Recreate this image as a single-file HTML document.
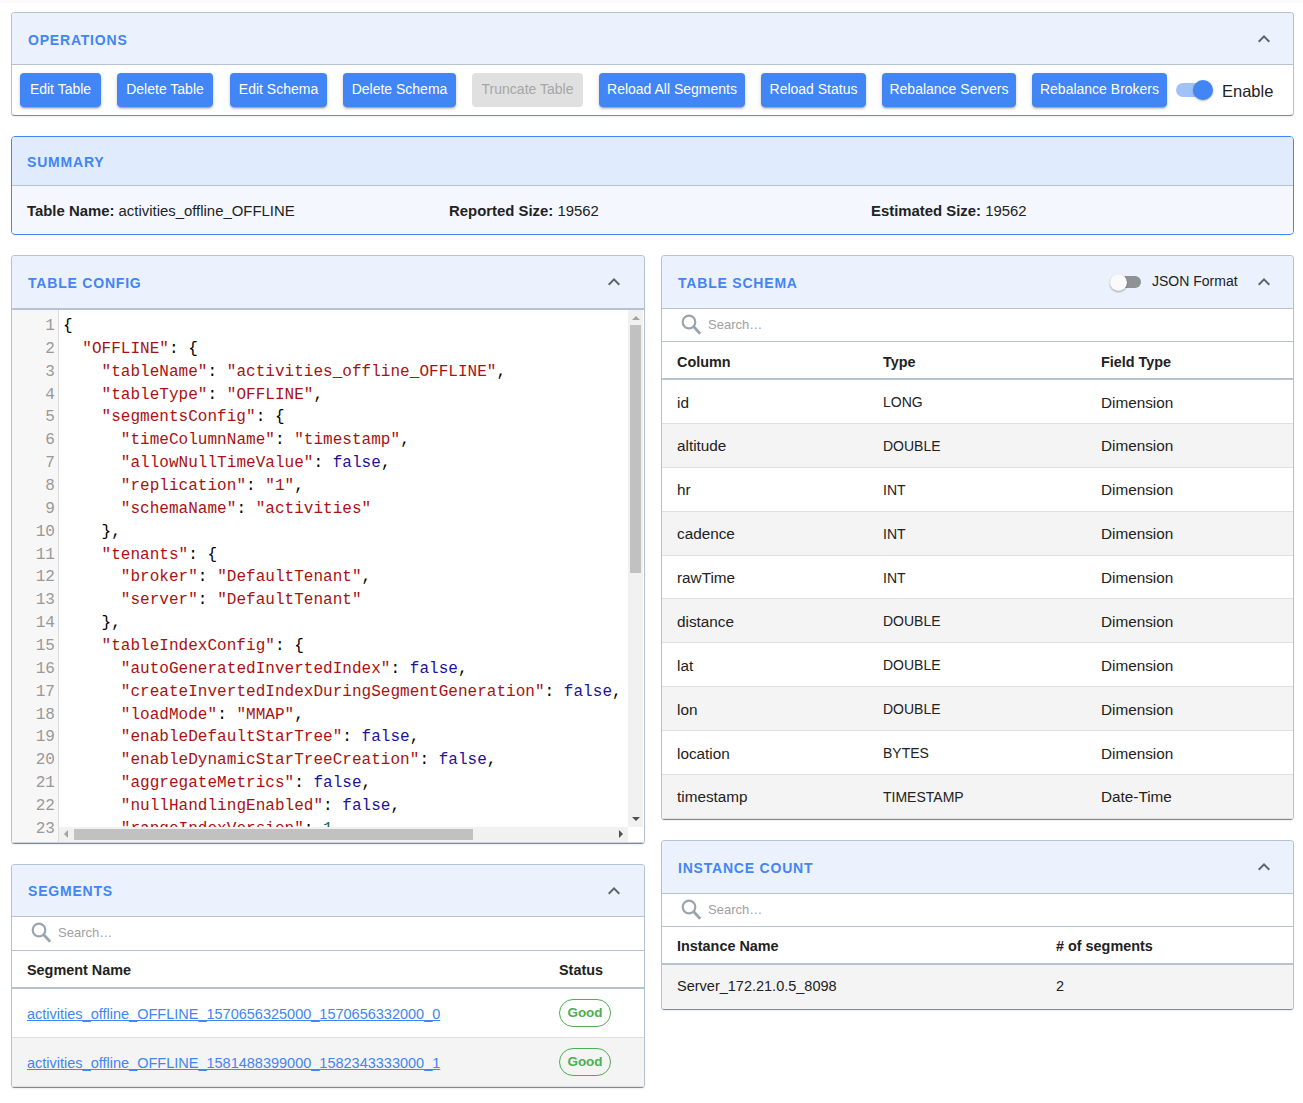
<!DOCTYPE html>
<html><head><meta charset="utf-8">
<style>
*{box-sizing:border-box;margin:0;padding:0}
html,body{width:1303px;height:1103px;overflow:hidden;background:#fff;font-family:"Liberation Sans",sans-serif;color:#222}
.topstrip{position:absolute;left:0;top:0;width:1303px;height:3px;background:#fafafa}
.panel{position:absolute;border:1px solid #b5c3d0;border-bottom-color:#7f8a94;border-radius:4px;background:#fff;overflow:hidden;box-shadow:0 1px 2px rgba(0,0,0,.07)}
.hdr{position:relative;height:52px;background:#ebf2fd;border-bottom:1px solid #b5c3d0}
.ttl{position:absolute;left:16px;top:19px;font-size:14px;font-weight:bold;letter-spacing:0.8px;color:#4285f4;line-height:15px}
.chev{position:absolute}
.btnrow{position:relative;height:50px}
.btn{position:absolute;top:8px;height:34px;border-radius:4px;background:#4285f4;color:#fff;font-size:14px;line-height:33px;text-align:center;box-shadow:0 3px 1px -2px rgba(0,0,0,.2),0 2px 2px 0 rgba(0,0,0,.14),0 1px 5px 0 rgba(0,0,0,.12)}
.btn.dis{background:#e0e0e0;color:#a6a6a6;box-shadow:none}
.search{position:relative;height:33px;border-bottom:1px solid #b5c3d0}
.search svg{position:absolute;left:18px;top:4px}
.search span{position:absolute;left:46px;top:9px;font-size:13px;color:#a0a0a0;line-height:14px}
.th{position:relative;border-bottom:2px solid #b5c3d0;font-weight:bold;font-size:14.4px;color:#222}
.th div,.tr div{position:absolute;white-space:nowrap}
.tr{position:relative;border-bottom:1px solid #e0e0e0;font-size:14.5px;color:#222}
.tr.alt{background:#f4f4f4}
.cm{position:absolute;left:0;top:54px;width:632px;height:533px;background:#fff;overflow:hidden;border-bottom:1px solid #c8d4de}
.cm .gut{position:absolute;left:0;top:0;width:47px;height:533px;background:#f7f7f7;border-right:1px solid #ddd}
.cm .lines{position:absolute;left:0;top:5px;width:616px;font-family:"Liberation Mono",monospace;font-size:16px;letter-spacing:0.03px}
.ln{position:relative;height:22.86px;line-height:22.86px;white-space:pre}
.ln .g{position:absolute;left:0;width:43px;text-align:right;color:#999}
.ln pre{position:absolute;left:51px;font:inherit;color:#000}
.s{color:#a11}.a{color:#219}.n{color:#164}
.cm .vsb{position:absolute;left:616px;top:0;width:15px;height:517px;background:#f1f1f1}
.cm .vsb .thumb{position:absolute;left:2px;top:15px;width:11px;height:248px;background:#c1c1c1}
.cm .vsb .up{position:absolute;left:3.5px;top:6px;width:0;height:0;border-left:4px solid transparent;border-right:4px solid transparent;border-bottom:4px solid #a3a3a3}
.cm .vsb .dn{position:absolute;left:3.5px;top:507px;width:0;height:0;border-left:4px solid transparent;border-right:4px solid transparent;border-top:4px solid #505050}
.cm .hsb{position:absolute;left:47px;top:517px;width:569px;height:15px;background:#f1f1f1}
.cm .hsb .thumb{position:absolute;left:15px;top:2px;width:399px;height:11px;background:#c1c1c1}
.cm .hsb .lt{position:absolute;left:5px;top:3px;width:0;height:0;border-top:4px solid transparent;border-bottom:4px solid transparent;border-right:4px solid #a3a3a3}
.cm .hsb .rt{position:absolute;left:560px;top:3px;width:0;height:0;border-top:4px solid transparent;border-bottom:4px solid transparent;border-left:4px solid #505050}
.cm .corner{position:absolute;left:616px;top:517px;width:15px;height:15px;background:#fff}
.lnk{color:#4285f4;text-decoration:underline;font-size:14.5px}
.chip{height:28px;width:52px;border:1px solid #4caf50;border-radius:14px;color:#4caf50;font-weight:bold;font-size:13.5px;line-height:26px;text-align:center}
</style></head><body>
<div class="topstrip"></div>

<!-- OPERATIONS -->
<div class="panel" style="left:11px;top:12px;width:1283px;height:104px">
  <div class="hdr" style="height:52px"><div class="ttl" style="top:20px">OPERATIONS</div>
    <svg class="chev" style="left:1240px;top:14px" width="24" height="24" viewBox="0 0 24 24"><path d="M12 8l-6 6 1.41 1.41L12 10.83l4.59 4.58L18 14z" fill="#5f6368"/></svg>
  </div>
  <div class="btnrow">
    <div class="btn" style="left:8px;width:81px">Edit Table</div>
    <div class="btn" style="left:105px;width:96px">Delete Table</div>
    <div class="btn" style="left:218px;width:97px">Edit Schema</div>
    <div class="btn" style="left:331px;width:113px">Delete Schema</div>
    <div class="btn dis" style="left:460px;width:111px">Truncate Table</div>
    <div class="btn" style="left:587px;width:146px">Reload All Segments</div>
    <div class="btn" style="left:749px;width:105px">Reload Status</div>
    <div class="btn" style="left:870px;width:134px">Rebalance Servers</div>
    <div class="btn" style="left:1020px;width:135px">Rebalance Brokers</div>
    <div style="position:absolute;left:1164px;top:18px;width:34px;height:14px;border-radius:7px;background:#a0c2f9"></div>
    <div style="position:absolute;left:1181px;top:15px;width:20px;height:20px;border-radius:50%;background:#4285f4;box-shadow:0 1px 2px rgba(0,0,0,.3)"></div>
    <div style="position:absolute;left:1210px;top:16px;font-size:16.5px;line-height:20px;color:#222">Enable</div>
  </div>
</div>

<!-- SUMMARY -->
<div class="panel" style="left:11px;top:136px;width:1283px;height:99px;border-color:#4285f4;background:#fff;box-shadow:none">
  <div class="hdr" style="height:49px;background:#e0ecfd;border-bottom-color:#b5c3d0"><div class="ttl" style="top:18px;left:15px">SUMMARY</div></div>
  <div style="position:relative;height:47px;background:#f4f8fe;font-size:14.9px;line-height:18px">
    <div style="position:absolute;left:15px;top:16px;white-space:nowrap"><b>Table Name:</b> activities_offline_OFFLINE</div>
    <div style="position:absolute;left:437px;top:16px;white-space:nowrap"><b>Reported Size:</b> 19562</div>
    <div style="position:absolute;left:859px;top:16px;white-space:nowrap"><b>Estimated Size:</b> 19562</div>
  </div>
</div>

<!-- TABLE CONFIG -->
<div class="panel" id="cfg" style="left:11px;top:255px;width:634px;height:589px">
  <div class="hdr" style="border-bottom-width:2px;height:54px"><div class="ttl" style="top:20px">TABLE CONFIG</div>
    <svg class="chev" style="left:590px;top:14px" width="24" height="24" viewBox="0 0 24 24"><path d="M12 8l-6 6 1.41 1.41L12 10.83l4.59 4.58L18 14z" fill="#5f6368"/></svg>
  </div>
  <div class="cm">
  <div class="gut"></div>
  <div class="lines"><div class="ln"><span class="g">1</span><pre>{</pre></div><div class="ln"><span class="g">2</span><pre>  <span class="s">&quot;OFFLINE&quot;</span>: {</pre></div><div class="ln"><span class="g">3</span><pre>    <span class="s">&quot;tableName&quot;</span>: <span class="s">&quot;activities_offline_OFFLINE&quot;</span>,</pre></div><div class="ln"><span class="g">4</span><pre>    <span class="s">&quot;tableType&quot;</span>: <span class="s">&quot;OFFLINE&quot;</span>,</pre></div><div class="ln"><span class="g">5</span><pre>    <span class="s">&quot;segmentsConfig&quot;</span>: {</pre></div><div class="ln"><span class="g">6</span><pre>      <span class="s">&quot;timeColumnName&quot;</span>: <span class="s">&quot;timestamp&quot;</span>,</pre></div><div class="ln"><span class="g">7</span><pre>      <span class="s">&quot;allowNullTimeValue&quot;</span>: <span class="a">false</span>,</pre></div><div class="ln"><span class="g">8</span><pre>      <span class="s">&quot;replication&quot;</span>: <span class="s">&quot;1&quot;</span>,</pre></div><div class="ln"><span class="g">9</span><pre>      <span class="s">&quot;schemaName&quot;</span>: <span class="s">&quot;activities&quot;</span></pre></div><div class="ln"><span class="g">10</span><pre>    },</pre></div><div class="ln"><span class="g">11</span><pre>    <span class="s">&quot;tenants&quot;</span>: {</pre></div><div class="ln"><span class="g">12</span><pre>      <span class="s">&quot;broker&quot;</span>: <span class="s">&quot;DefaultTenant&quot;</span>,</pre></div><div class="ln"><span class="g">13</span><pre>      <span class="s">&quot;server&quot;</span>: <span class="s">&quot;DefaultTenant&quot;</span></pre></div><div class="ln"><span class="g">14</span><pre>    },</pre></div><div class="ln"><span class="g">15</span><pre>    <span class="s">&quot;tableIndexConfig&quot;</span>: {</pre></div><div class="ln"><span class="g">16</span><pre>      <span class="s">&quot;autoGeneratedInvertedIndex&quot;</span>: <span class="a">false</span>,</pre></div><div class="ln"><span class="g">17</span><pre>      <span class="s">&quot;createInvertedIndexDuringSegmentGeneration&quot;</span>: <span class="a">false</span>,</pre></div><div class="ln"><span class="g">18</span><pre>      <span class="s">&quot;loadMode&quot;</span>: <span class="s">&quot;MMAP&quot;</span>,</pre></div><div class="ln"><span class="g">19</span><pre>      <span class="s">&quot;enableDefaultStarTree&quot;</span>: <span class="a">false</span>,</pre></div><div class="ln"><span class="g">20</span><pre>      <span class="s">&quot;enableDynamicStarTreeCreation&quot;</span>: <span class="a">false</span>,</pre></div><div class="ln"><span class="g">21</span><pre>      <span class="s">&quot;aggregateMetrics&quot;</span>: <span class="a">false</span>,</pre></div><div class="ln"><span class="g">22</span><pre>      <span class="s">&quot;nullHandlingEnabled&quot;</span>: <span class="a">false</span>,</pre></div><div class="ln"><span class="g">23</span><pre>      <span class="s">&quot;rangeIndexVersion&quot;</span>: <span class="n">1</span>,</pre></div></div>
  <div class="vsb"><div class="up"></div><div class="thumb"></div><div class="dn"></div></div>
  <div class="hsb"><div class="lt"></div><div class="thumb"></div><div class="rt"></div></div>
  <div class="corner"></div>
</div>

</div>

<!-- TABLE SCHEMA -->
<div class="panel" style="left:661px;top:255px;width:633px;height:565px">
  <div class="hdr" style="height:53px"><div class="ttl" style="top:20px">TABLE SCHEMA</div>
    <div style="position:absolute;left:454px;top:20px;width:25px;height:12px;border-radius:6px;background:#8e9196"></div>
<div style="position:absolute;left:448px;top:18px;width:17px;height:17px;border-radius:50%;background:#fafafa;box-shadow:0 1px 2px rgba(0,0,0,.35)"></div>
<div style="position:absolute;left:490px;top:17px;font-size:14px;line-height:17px;color:#222">JSON Format</div>
    <svg class="chev" style="left:590px;top:14px" width="24" height="24" viewBox="0 0 24 24"><path d="M12 8l-6 6 1.41 1.41L12 10.83l4.59 4.58L18 14z" fill="#5f6368"/></svg>
  </div>
  <div class="search" style="height:33px"><svg width="22" height="22" viewBox="0 0 22 22"><circle cx="9" cy="9" r="6.3" fill="none" stroke="#9aa5ae" stroke-width="2.2"/><path d="M13.5 13.5 L20.2 20.8" stroke="#9aa5ae" stroke-width="2.8"/></svg><span>Search…</span></div><div class="th" style="height:38px"><div style="left:15px;top:12px">Column</div><div style="left:221px;top:12px">Type</div><div style="left:439px;top:12px">Field Type</div></div><div class="tr" style="height:43.875px"><div style="left:15px;top:13.5px;font-size:15.3px">id</div><div style="left:221px;top:14px;font-size:14px">LONG</div><div style="left:439px;top:13.5px;font-size:15.3px">Dimension</div></div><div class="tr alt" style="height:43.875px"><div style="left:15px;top:13.5px;font-size:15.3px">altitude</div><div style="left:221px;top:14px;font-size:14px">DOUBLE</div><div style="left:439px;top:13.5px;font-size:15.3px">Dimension</div></div><div class="tr" style="height:43.875px"><div style="left:15px;top:13.5px;font-size:15.3px">hr</div><div style="left:221px;top:14px;font-size:14px">INT</div><div style="left:439px;top:13.5px;font-size:15.3px">Dimension</div></div><div class="tr alt" style="height:43.875px"><div style="left:15px;top:13.5px;font-size:15.3px">cadence</div><div style="left:221px;top:14px;font-size:14px">INT</div><div style="left:439px;top:13.5px;font-size:15.3px">Dimension</div></div><div class="tr" style="height:43.875px"><div style="left:15px;top:13.5px;font-size:15.3px">rawTime</div><div style="left:221px;top:14px;font-size:14px">INT</div><div style="left:439px;top:13.5px;font-size:15.3px">Dimension</div></div><div class="tr alt" style="height:43.875px"><div style="left:15px;top:13.5px;font-size:15.3px">distance</div><div style="left:221px;top:14px;font-size:14px">DOUBLE</div><div style="left:439px;top:13.5px;font-size:15.3px">Dimension</div></div><div class="tr" style="height:43.875px"><div style="left:15px;top:13.5px;font-size:15.3px">lat</div><div style="left:221px;top:14px;font-size:14px">DOUBLE</div><div style="left:439px;top:13.5px;font-size:15.3px">Dimension</div></div><div class="tr alt" style="height:43.875px"><div style="left:15px;top:13.5px;font-size:15.3px">lon</div><div style="left:221px;top:14px;font-size:14px">DOUBLE</div><div style="left:439px;top:13.5px;font-size:15.3px">Dimension</div></div><div class="tr" style="height:43.875px"><div style="left:15px;top:13.5px;font-size:15.3px">location</div><div style="left:221px;top:14px;font-size:14px">BYTES</div><div style="left:439px;top:13.5px;font-size:15.3px">Dimension</div></div><div class="tr alt" style="height:43.875px"><div style="left:15px;top:13.5px;font-size:15.3px">timestamp</div><div style="left:221px;top:14px;font-size:14px">TIMESTAMP</div><div style="left:439px;top:13.5px;font-size:15.3px">Date-Time</div></div>
</div>

<!-- SEGMENTS -->
<div class="panel" style="left:11px;top:864px;width:634px;height:224px">
  <div class="hdr" style="height:52px"><div class="ttl" style="top:19px">SEGMENTS</div><svg class="chev" style="left:590px;top:14px" width="24" height="24" viewBox="0 0 24 24"><path d="M12 8l-6 6 1.41 1.41L12 10.83l4.59 4.58L18 14z" fill="#5f6368"/></svg></div><div class="search" style="height:34px"><svg width="22" height="22" viewBox="0 0 22 22"><circle cx="9" cy="9" r="6.3" fill="none" stroke="#9aa5ae" stroke-width="2.2"/><path d="M13.5 13.5 L20.2 20.8" stroke="#9aa5ae" stroke-width="2.8"/></svg><span>Search…</span></div><div class="th" style="height:38px"><div style="left:15px;top:11px">Segment Name</div><div style="left:547px;top:11px">Status</div></div><div class="tr" style="height:49px"><div class="lnk" style="left:15px;top:17px">activities_offline_OFFLINE_1570656325000_1570656332000_0</div><div class="chip" style="left:547px;top:10px">Good</div></div><div class="tr alt" style="height:49px"><div class="lnk" style="left:15px;top:17px">activities_offline_OFFLINE_1581488399000_1582343333000_1</div><div class="chip" style="left:547px;top:10px">Good</div></div>
</div>

<!-- INSTANCE COUNT -->
<div class="panel" style="left:661px;top:840px;width:633px;height:170px">
  <div class="hdr" style="height:53px"><div class="ttl" style="top:20px">INSTANCE COUNT</div><svg class="chev" style="left:590px;top:14px" width="24" height="24" viewBox="0 0 24 24"><path d="M12 8l-6 6 1.41 1.41L12 10.83l4.59 4.58L18 14z" fill="#5f6368"/></svg></div><div class="search" style="height:33px"><svg width="22" height="22" viewBox="0 0 22 22"><circle cx="9" cy="9" r="6.3" fill="none" stroke="#9aa5ae" stroke-width="2.2"/><path d="M13.5 13.5 L20.2 20.8" stroke="#9aa5ae" stroke-width="2.8"/></svg><span>Search…</span></div><div class="th" style="height:38px"><div style="left:15px;top:11px">Instance Name</div><div style="left:394px;top:11px">#&nbsp;of segments</div></div><div class="tr alt" style="height:44px;border-bottom:none"><div style="left:15px;top:13px">Server_172.21.0.5_8098</div><div style="left:394px;top:13px">2</div></div>
</div>
</body></html>
